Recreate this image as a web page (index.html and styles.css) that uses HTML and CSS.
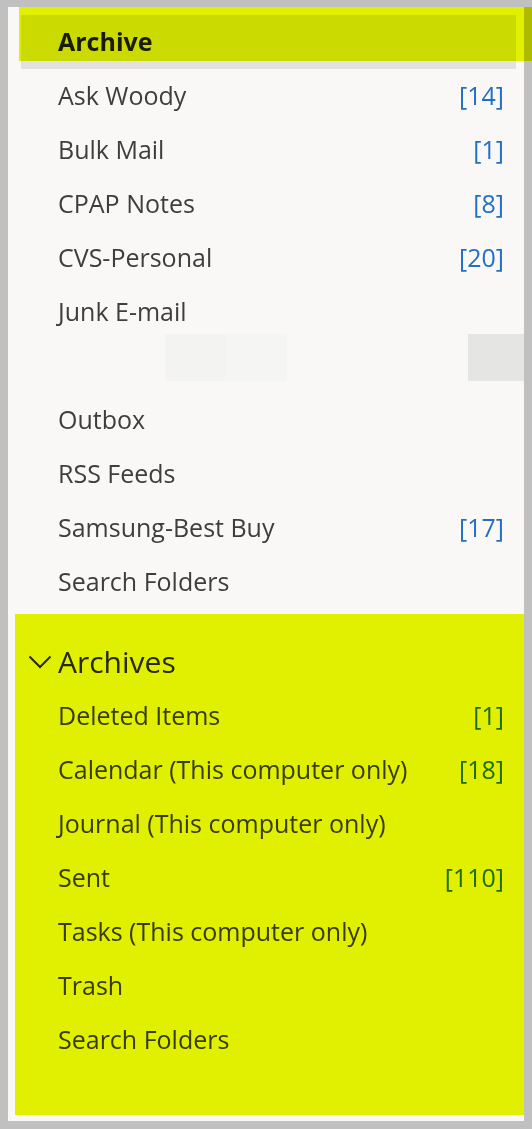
FILE: index.html
```html
<!DOCTYPE html>
<html lang="en">
<head>
  <meta charset="UTF-8">
  <title>Folders</title>
  <link rel="stylesheet" href="styles.css">
</head>
<body>
  <div class="pane">
    <!-- Main mailbox folders -->
    <div class="folder selected">
      <span class="name">Archive</span>
      <div class="marker top-marker"></div>
    </div>
    <div class="folder"><span class="name">Ask Woody</span><span class="count">[14]</span></div>
    <div class="folder"><span class="name">Bulk Mail</span><span class="count">[1]</span></div>
    <div class="folder"><span class="name">CPAP Notes</span><span class="count">[8]</span></div>
    <div class="folder"><span class="name">CVS-Personal</span><span class="count">[20]</span></div>
    <div class="folder"><span class="name">Junk E-mail</span></div>
    <div class="folder ghost">
      <span class="smudge s1"></span>
      <span class="smudge s2"></span>
      <span class="smudge s3"></span>
    </div>
    <div class="folder"><span class="name">Outbox</span></div>
    <div class="folder"><span class="name">RSS Feeds</span></div>
    <div class="folder"><span class="name">Samsung-Best Buy</span><span class="count">[17]</span></div>
    <div class="folder"><span class="name">Search Folders</span></div>

    <!-- Archives data file -->
    <div class="group">
      <div class="group-head">
        <svg class="chevron" width="24" height="14" viewBox="0 0 24 14">
          <polyline points="1.5,1.5 12,12 22.5,1.5" fill="none" stroke="#2b2b2b" stroke-width="2"/>
        </svg>
        <span>Archives</span>
      </div>
      <div class="folder"><span class="name">Deleted Items</span><span class="count">[1]</span></div>
      <div class="folder"><span class="name">Calendar (This computer only)</span><span class="count">[18]</span></div>
      <div class="folder"><span class="name">Journal (This computer only)</span></div>
      <div class="folder"><span class="name">Sent</span><span class="count">[110]</span></div>
      <div class="folder"><span class="name">Tasks (This computer only)</span></div>
      <div class="folder"><span class="name">Trash</span></div>
      <div class="folder"><span class="name">Search Folders</span></div>
      <div class="marker"></div>
    </div>
  </div>
</body>
</html>
```
FILE: styles.css
```css
/* Basic styles */
body {
    margin: 0;
    background: #c0c0c0;
    font-family: "Open Sans", "Noto Sans", sans-serif;
}

.pane {
    margin: 7px 8px 8px 8px;
    padding: 8px 0 6px 0;
    background: #f9f8f6;
}

/* Folder rows */
.folder {
    position: relative;
    height: 54px;
    display: flex;
    align-items: center;
    justify-content: space-between;
    padding: 0 20px 2px 50px;
    box-sizing: border-box;
    font-size: 25px;
    color: #3e3e3e;
}
.count {
    color: #2270c4;
}

.selected {
    margin: 0 8px 0 13px;
    padding-left: 37px;
    background: #e1e1e1;
}
.selected .name {
    font-weight: 700;
    color: #1c1c1c;
}

/* leftover blank row */
.ghost {
    align-items: flex-start;
    justify-content: flex-start;
    padding: 0;
}
.smudge {
    height: 47px;
    margin-top: -5px;
}
.s1 {
    margin-left: 157px;
    width: 60px;
    background: #f3f3f2;
}
.s2 {
    width: 62px;
    background: #f5f5f4;
}
.s3 {
    margin-left: auto;
    width: 56px;
    background: #e5e5e4;
}

/* Highlighter marks */
.marker {
    position: absolute;
    inset: 0;
    background: #e6f700;
    mix-blend-mode: multiply;
    pointer-events: none;
}
.top-marker {
    inset: -8px -16px 8px -2px;
}

/* Archives group */
.group {
    position: relative;
    margin: 5px 0 0 7px;
    padding: 21px 0 48px 0;
}
.group .folder {
    padding-left: 43px;
}
.group-head {
    height: 54px;
    display: flex;
    align-items: center;
    gap: 6px;
    padding: 0 0 2px 13px;
    box-sizing: border-box;
    font-size: 30px;
    color: #2b2b2b;
}
.chevron {
    margin-top: 2px;
}
```
